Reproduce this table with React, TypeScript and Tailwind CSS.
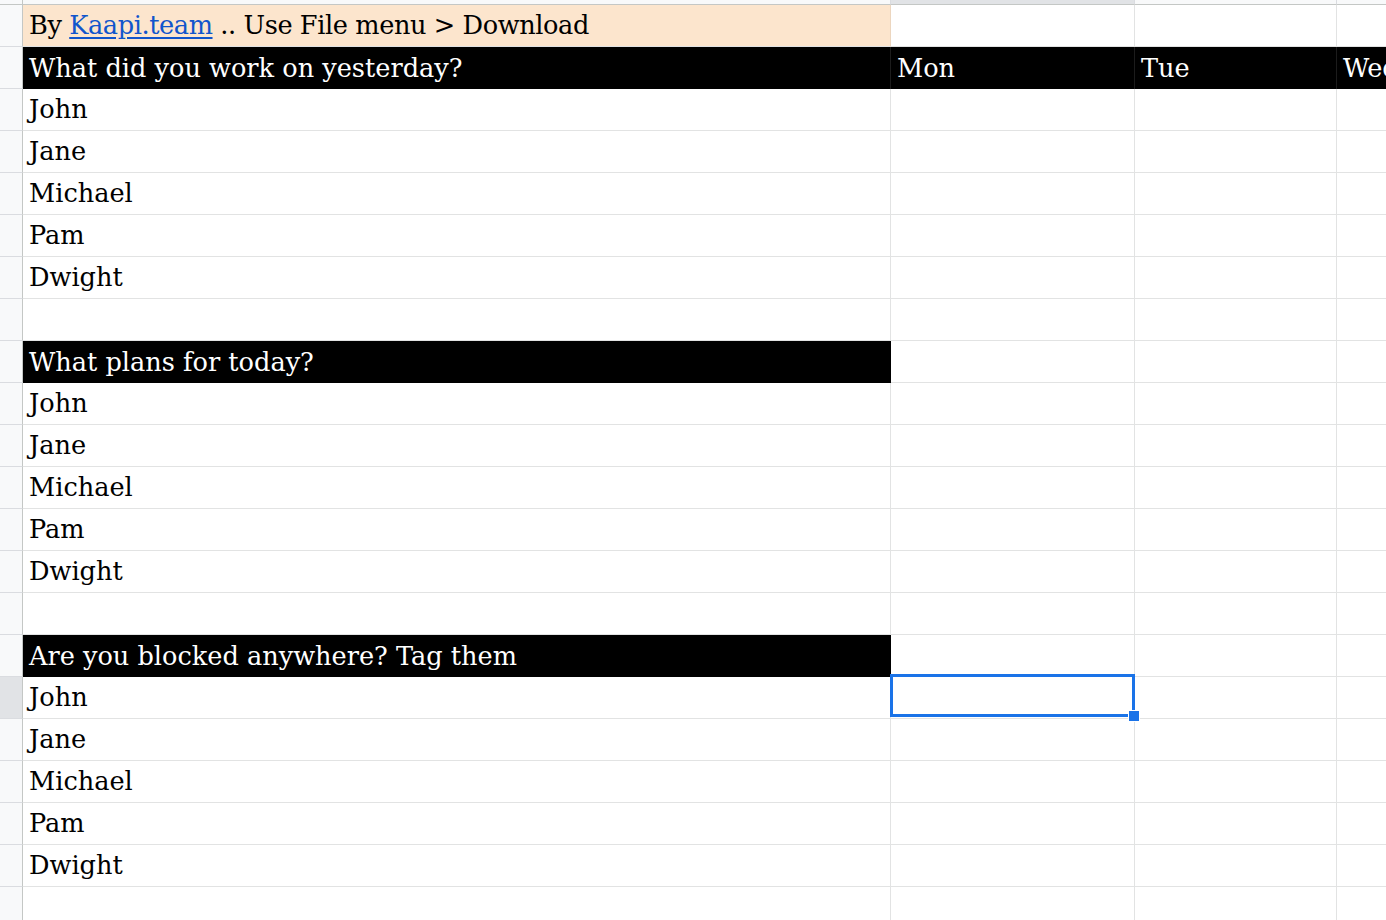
import React from "react";

type Row = {
  kind: "title" | "head" | "headA" | "name" | "blank";
  text?: string;
};

const rows: Row[] = [
  { kind: "title" },
  { kind: "head", text: "What did you work on yesterday?" },
  { kind: "name", text: "John" },
  { kind: "name", text: "Jane" },
  { kind: "name", text: "Michael" },
  { kind: "name", text: "Pam" },
  { kind: "name", text: "Dwight" },
  { kind: "blank" },
  { kind: "headA", text: "What plans for today?" },
  { kind: "name", text: "John" },
  { kind: "name", text: "Jane" },
  { kind: "name", text: "Michael" },
  { kind: "name", text: "Pam" },
  { kind: "name", text: "Dwight" },
  { kind: "blank" },
  { kind: "headA", text: "Are you blocked anywhere? Tag them" },
  { kind: "name", text: "John" },
  { kind: "name", text: "Jane" },
  { kind: "name", text: "Michael" },
  { kind: "name", text: "Pam" },
  { kind: "name", text: "Dwight" },
  { kind: "blank" },
];

const SELECTED_ROW = 16;

function GridRow({ row, idx }: { row: Row; idx: number }) {
  const selected = idx === SELECTED_ROW;
  const rowHeader = (
    <div
      className={
        "w-[23px] shrink-0 h-full border-r border-b border-r-[#c4c7c5] border-b-[#dadce0] " +
        (selected ? "bg-[#e1e3e6]" : "bg-[#f8f9fa]")
      }
    />
  );
  const cellText = "px-[6px] flex items-end pb-[6px] text-[25.6px] leading-[30px] whitespace-nowrap overflow-hidden";

  if (row.kind === "title") {
    return (
      <div className="flex h-[42px]">
        {rowHeader}
        <div className={"w-[868px] shrink-0 bg-[#fce5cd] border-r border-b border-r-[#ecd6bf] border-b-[#e2e3e3] text-black " + cellText}>
          <span className="tracking-[-0.4px]">
            By{" "}
            <span className="text-[#1155cc] underline decoration-[2px] underline-offset-[3px]">Kaapi.team</span>{" "}
            .. Use File menu &gt; Download
          </span>
        </div>
        <div className="w-[244px] shrink-0 border-r border-b border-[#e2e3e3]" />
        <div className="w-[202px] shrink-0 border-r border-b border-[#e2e3e3]" />
        <div className="flex-1 border-b border-[#e2e3e3]" />
      </div>
    );
  }
  if (row.kind === "head") {
    return (
      <div className="flex h-[42px]">
        {rowHeader}
        <div className={"w-[868px] shrink-0 bg-black text-white border-r border-[#1c1c1c] " + cellText}>{row.text}</div>
        <div className={"w-[244px] shrink-0 bg-black text-white border-r border-[#1c1c1c] " + cellText}>Mon</div>
        <div className={"w-[202px] shrink-0 bg-black text-white border-r border-[#1c1c1c] " + cellText}>Tue</div>
        <div className={"flex-1 bg-black text-white " + cellText}>Wed</div>
      </div>
    );
  }
  if (row.kind === "headA") {
    return (
      <div className="flex h-[42px]">
        {rowHeader}
        <div className={"w-[868px] shrink-0 bg-black text-white border-r border-black " + cellText}>{row.text}</div>
        <div className="w-[244px] shrink-0 border-r border-b border-[#e2e3e3]" />
        <div className="w-[202px] shrink-0 border-r border-b border-[#e2e3e3]" />
        <div className="flex-1 border-b border-[#e2e3e3]" />
      </div>
    );
  }
  return (
    <div className="flex h-[42px]">
      {rowHeader}
      <div className={"w-[868px] shrink-0 text-black border-r border-b border-[#e2e3e3] " + cellText}>{row.text ?? ""}</div>
      <div className="w-[244px] shrink-0 border-r border-b border-[#e2e3e3]" />
      <div className="w-[202px] shrink-0 border-r border-b border-[#e2e3e3]" />
      <div className="flex-1 border-b border-[#e2e3e3]" />
    </div>
  );
}

export default function App() {
  return (
    <div
      className="relative w-[1386px] h-[920px] overflow-hidden bg-white"
      style={{ fontFamily: '"DejaVu Serif", "Liberation Serif", serif' }}
    >
      {/* column header strip */}
      <div className="flex h-[5px]">
        <div className="w-[23px] shrink-0 bg-[#f8f9fa] border-r border-b border-[#c4c7c5]" />
        <div className="w-[868px] shrink-0 bg-[#f8f9fa] border-r border-b border-r-[#dadce0] border-b-[#c4c7c5]" />
        <div className="w-[244px] shrink-0 bg-[#e1e3e6] border-r border-b border-r-[#dadce0] border-b-[#c4c7c5]" />
        <div className="w-[202px] shrink-0 bg-[#f8f9fa] border-r border-b border-r-[#dadce0] border-b-[#c4c7c5]" />
        <div className="flex-1 bg-[#f8f9fa] border-b border-[#c4c7c5]" />
      </div>
      {rows.map((r, i) => (
        <GridRow key={i} row={r} idx={i} />
      ))}

      {/* selection */}
      <div className="absolute left-[890px] top-[674px] w-[245px] h-[43px] border-[3px] border-[#1a73e8]" />
      <div className="absolute left-[1128px] top-[710px] w-[12px] h-[12px] bg-[#1a73e8] border border-white" />
    </div>
  );
}
